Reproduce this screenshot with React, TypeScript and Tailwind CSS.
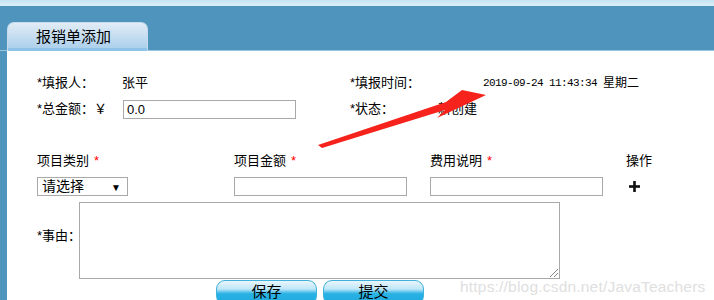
import React from "react";

const cjk = { fontFamily: '"Liberation Sans","Noto Sans CJK SC",sans-serif' };

function Star() {
  return <span className="text-[#ff0000] ml-[5px]">*</span>;
}

export default function App() {
  return (
    <div className="relative w-[714px] h-[300px] overflow-hidden bg-white text-[13px] text-black" style={cjk}>
      {/* header */}
      <div className="h-[6px] bg-gradient-to-b from-[#c4e3f3] to-[#dbeff8]" />
      <div className="flex h-[45px] bg-[#4e94bd] items-end pl-[7px] border-b border-[#9cc6de]">
        <div className="relative w-[141px] h-[29px] rounded-t-[7px] bg-gradient-to-b from-[#e1ecf6] to-[#a7cdeb] border border-b-0 border-[#c6dcee] -mb-px">
          <div className="absolute left-0 right-0 bottom-0 h-[3px] bg-[#8fc4ea]" />
          <div className="pl-[28px] pt-[5px] text-[15px] leading-[18px]">报销单添加</div>
        </div>
      </div>
      <div className="flex h-[249px]">
        <div className="w-[7px] bg-[#4e94bd]" />
        <div className="flex-1 flex flex-col pl-[30px]">
          {/* row 1 */}
          <div className="flex items-center h-[20px] mt-[22px]">
            <div className="w-[85px]">*填报人：</div>
            <div className="w-[228px]">张平</div>
            <div className="w-[133px]">*填报时间：</div>
            <div className="flex items-center">
              <span className="text-[11px] tracking-[-0.6px]" style={{ fontFamily: '"Liberation Mono",monospace' }}>2019-09-24 11:43:34</span>
              <span className="ml-[6px] text-[12px]">星期二</span>
            </div>
          </div>
          {/* row 2 */}
          <div className="flex items-center h-[19px] mt-[7px]">
            <div className="w-[86px]">*总金额：￥</div>
            <div className="w-[227px]">
              <div className="w-[173px] h-[19px] border border-[#a9a9a9] pl-[3px] leading-[17px] text-[13px]">0.0</div>
            </div>
            <div className="w-[88px]">*状态：</div>
            <div>新创建</div>
          </div>
          {/* table header */}
          <div className="flex items-center h-[16px] mt-[34px]">
            <div className="w-[197px]">项目类别<Star /></div>
            <div className="w-[196px]">项目金额<Star /></div>
            <div className="w-[196px]">费用说明<Star /></div>
            <div>操作</div>
          </div>
          <div className="flex items-center h-[19px] mt-[8px]">
            <div className="w-[197px]">
              <div className="relative w-[91px] h-[19px] border border-[#a9a9a9] pl-[4px] leading-[17px] text-[14px]">
                请选择
                <span className="absolute right-[6px] top-[1px] text-[10px]">▼</span>
              </div>
            </div>
            <div className="w-[196px]">
              <div className="w-[173px] h-[19px] border border-[#a9a9a9]" />
            </div>
            <div className="w-[196px]">
              <div className="w-[173px] h-[19px] border border-[#a9a9a9]" />
            </div>
            <div className="pl-[3px]">
              <svg width="11" height="11" viewBox="0 0 11 11">
                <rect x="0" y="4.2" width="11" height="2.6" fill="#111" />
                <rect x="4.2" y="0" width="2.6" height="11" fill="#111" />
              </svg>
            </div>
          </div>
          {/* reason */}
          <div className="flex mt-[6px]">
            <div className="w-[42px] pt-[24px] whitespace-nowrap">*事由：</div>
            <div className="relative w-[481px] h-[77px] border border-[#a9a9a9]">
              <svg className="absolute right-[1px] bottom-[1px]" width="9" height="9" viewBox="0 0 9 9">
                <line x1="1" y1="9" x2="9" y2="1" stroke="#888" strokeWidth="1" />
                <line x1="5" y1="9" x2="9" y2="5" stroke="#888" strokeWidth="1" />
              </svg>
            </div>
          </div>
          <div className="flex gap-[6px] pl-[179px] mt-px">
            {["保存", "提交"].map((t) => (
              <div
                key={t}
                className="w-[101px] h-[25px] rounded-[9px] border border-[#3fb1dc] flex items-center justify-center text-[15px]"
                style={{ backgroundImage: "linear-gradient(#e9f6fc 0%, #bfe6f7 35%, #2ab2e4 55%, #1da9df 100%)" }}
              >
                {t}
              </div>
            ))}
          </div>
        </div>
      </div>
      {/* watermark */}
      <div
        className="absolute left-[460px] top-[275px] text-[15.5px] text-[#e0e0e0] tracking-[0.2px]"
        style={{ fontFamily: '"Liberation Sans",sans-serif', textShadow: "0 0 1px #fff" }}
      >
        https://blog.csdn.net/JavaTeachers
      </div>
      {/* red arrow annotation */}
      <svg className="absolute left-0 top-0 pointer-events-none" width="714" height="300" viewBox="0 0 714 300">
        <polygon points="318,145 446,102 462,90 486,95 437,118 445,110 322,148" fill="#f5231c" />
      </svg>
    </div>
  );
}
